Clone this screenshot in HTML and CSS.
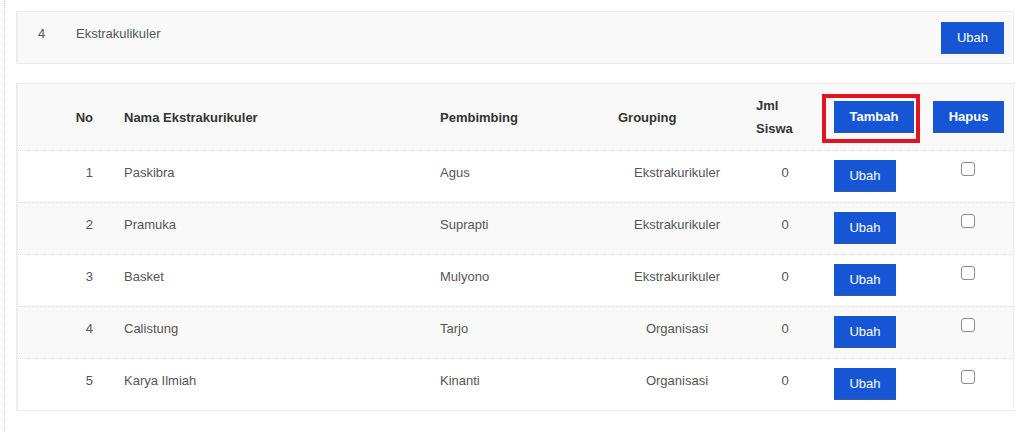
FILE: index.html
```html
<!DOCTYPE html>
<html lang="id">
<head>
<meta charset="utf-8">
<title>Ekstrakurikuler</title>
<link rel="stylesheet" href="styles.css">
</head>
<body>
<div class="page">
  <div class="panel">
    <span class="panel-no">4</span>
    <span class="panel-name">Ekstrakulikuler</span>
    <button class="btn btn-top">Ubah</button>
  </div>

  <div class="table">
    <div class="row head">
      <div class="c c-no">No</div>
      <div class="c c-name">Nama Ekstrakurikuler</div>
      <div class="c c-pemb">Pembimbing</div>
      <div class="c c-group">Grouping</div>
      <div class="c c-jml">Jml<br>Siswa</div>
      <div class="c c-act"><button class="btn btn-bold btn-tambah">Tambah</button><span class="mark"></span></div>
      <div class="c c-del"><button class="btn btn-bold btn-hapus">Hapus</button></div>
    </div>

    <div class="row">
      <div class="c c-no">1</div>
      <div class="c c-name">Paskibra</div>
      <div class="c c-pemb">Agus</div>
      <div class="c c-group">Ekstrakurikuler</div>
      <div class="c c-jml">0</div>
      <div class="c c-act"><button class="btn btn-row">Ubah</button></div>
      <div class="c c-del"><input type="checkbox" class="chk"></div>
    </div>
    <div class="row alt">
      <div class="c c-no">2</div>
      <div class="c c-name">Pramuka</div>
      <div class="c c-pemb">Suprapti</div>
      <div class="c c-group">Ekstrakurikuler</div>
      <div class="c c-jml">0</div>
      <div class="c c-act"><button class="btn btn-row">Ubah</button></div>
      <div class="c c-del"><input type="checkbox" class="chk"></div>
    </div>
    <div class="row">
      <div class="c c-no">3</div>
      <div class="c c-name">Basket</div>
      <div class="c c-pemb">Mulyono</div>
      <div class="c c-group">Ekstrakurikuler</div>
      <div class="c c-jml">0</div>
      <div class="c c-act"><button class="btn btn-row">Ubah</button></div>
      <div class="c c-del"><input type="checkbox" class="chk"></div>
    </div>
    <div class="row alt">
      <div class="c c-no">4</div>
      <div class="c c-name">Calistung</div>
      <div class="c c-pemb">Tarjo</div>
      <div class="c c-group">Organisasi</div>
      <div class="c c-jml">0</div>
      <div class="c c-act"><button class="btn btn-row">Ubah</button></div>
      <div class="c c-del"><input type="checkbox" class="chk"></div>
    </div>
    <div class="row">
      <div class="c c-no">5</div>
      <div class="c c-name">Karya Ilmiah</div>
      <div class="c c-pemb">Kinanti</div>
      <div class="c c-group">Organisasi</div>
      <div class="c c-jml">0</div>
      <div class="c c-act"><button class="btn btn-row">Ubah</button></div>
      <div class="c c-del"><input type="checkbox" class="chk"></div>
    </div>
  </div>
</div>
</body>
</html>
```

FILE: styles.css
```css
* { box-sizing: border-box; }

html, body {
  margin: 0;
  padding: 0;
  background: #ffffff;
}

body {
  font-family: "Liberation Sans", Arial, sans-serif;
  font-size: 13px;
  line-height: 20px;
  color: #555555;
}

.page {
  margin-left: 4px;
  border-left: 1px dotted #d2d2d2;
  min-height: 432px;
  padding: 11px 10px 0 11px;
}

/* top panel */
.panel {
  display: flex;
  align-items: flex-start;
  height: 53px;
  padding: 10px 9px 0 20px;
  background: #f9f9f9;
  border: 1px solid #ededed;
  border-left: 2px solid #ededed;
}

.panel-no {
  width: 38px;
  margin-top: 2px;
}

.panel-name {
  flex: 1;
  margin-top: 2px;
}

/* buttons */
.btn {
  height: 32px;
  padding: 0;
  margin: 0;
  border: 1px solid #1656d5;
  border-bottom-color: #34579d;
  border-radius: 0;
  background: #1656d5;
  color: #ffffff;
  font-family: "Liberation Sans", Arial, sans-serif;
  font-size: 13px;
  line-height: 30px;
  text-align: center;
  cursor: pointer;
}

.btn-bold { font-weight: bold; }
.btn-top { width: 63px; }
.btn-row { width: 62px; }
.btn-tambah { width: 80px; }
.btn-hapus { width: 71px; }

/* table */
.table {
  margin-top: 19px;
  border: 1px solid #ececec;
  border-left: 2px solid #ececec;
}

.row {
  display: grid;
  grid-template-columns: 98px 316px 178px 138px 78px 99px 88px;
  height: 52px;
  border-top: 1px dotted #dcdcdc;
  background: #ffffff;
}

.row.alt { background: #f9f9f9; }

.row.head {
  height: 66px;
  border-top: 0;
  background: #f9f9f9;
  align-items: center;
  color: #333333;
  font-weight: bold;
  line-height: 23px;
}

.c {
  padding: 12px 8px 0 8px;
}

.head .c { padding-top: 0; }

.c-no {
  text-align: right;
  padding-right: 23px;
}

.c-group {
  text-align: center;
  padding-right: 12px;
}

.c-jml {
  text-align: center;
  padding-right: 12px;
}

.head .c-group,
.head .c-jml {
  text-align: left;
}

.c-act {
  padding-top: 9px;
  position: relative;
}

.head .c-act { padding-top: 0; }

.c-del {
  padding-top: 11px;
  padding-right: 10px;
  text-align: center;
}

.head .c-del {
  padding-top: 0;
  text-align: left;
}

.chk {
  -webkit-appearance: none;
  appearance: none;
  display: inline-block;
  width: 14px;
  height: 14px;
  margin: 0;
  border: 1.5px solid #8a8a8a;
  border-radius: 3px;
  background: #ffffff;
  vertical-align: top;
}

/* red highlight annotation around Tambah */
.mark {
  position: absolute;
  left: -4px;
  top: -7px;
  width: 98px;
  height: 49px;
  border: 4px solid #e5121f;
  pointer-events: none;
}
```
